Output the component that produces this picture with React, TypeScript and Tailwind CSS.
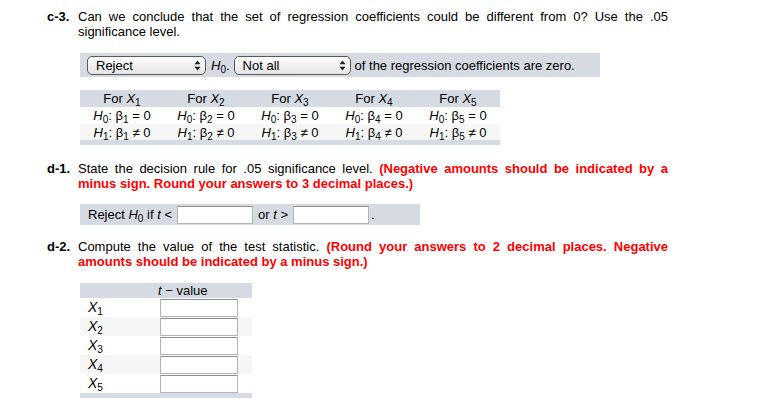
const band = "bg-[#d5dae3]"

function Sub({ v, n }: { v: string; n: string | number }) {
  return (
    <span className="whitespace-nowrap">
      <i>{v}</i>
      <sub className="text-[10px] not-italic relative top-[3px] align-baseline">{n}</sub>
    </span>
  )
}

function Beta({ n }: { n: number }) {
  return (
    <span className="whitespace-nowrap">
      β<sub className="text-[10px] relative top-[3px] align-baseline">{n}</sub>
    </span>
  )
}

function Select({ label, width }: { label: string; width: string }) {
  return (
    <div
      className={`${width} h-[19px] rounded-[5px] border border-[#5a5a5a] bg-gradient-to-b from-white to-[#e4e4e4] flex items-center justify-between pl-[8px] pr-[4px] text-black`}
    >
      <span>{label}</span>
      <svg width="7" height="11" viewBox="0 0 7 11">
        <path d="M3.5 0.5 L6.5 4.3 L0.5 4.3 Z" fill="#222" />
        <path d="M3.5 10.5 L6.5 6.7 L0.5 6.7 Z" fill="#222" />
      </svg>
    </div>
  )
}

function Question({ tag, children }: { tag: string; children: React.ReactNode }) {
  return (
    <div className="flex pl-[47px]">
      <div className="w-[31px] shrink-0 font-bold">{tag}</div>
      <div className="w-[590px] text-justify leading-[15px]">{children}</div>
    </div>
  )
}

const cols = [1, 2, 3, 4, 5]
const inputCls = "bg-white border border-[#b4b4b4] border-t-[#8f8f8f] outline-none"

export default function App() {
  return (
    <div className="w-[772px] h-[408px] bg-white text-black text-[13px] leading-[15px] font-['Liberation_Sans',Arial,sans-serif] pt-[9px] overflow-hidden">
      <Question tag="c-3.">
        Can we conclude that the set of regression coefficients could be different from 0? Use the .05 significance level.
      </Question>

      <div className={`ml-[80px] mt-[14px] w-[520px] h-[24px] ${band} flex items-center pl-[7px]`}>
        <Select label="Reject" width="w-[119px]" />
        <span className="ml-[5px] mr-[4px]">
          <Sub v="H" n={0} />.
        </span>
        <Select label="Not all" width="w-[117px]" />
        <span className="ml-[4px]">of the regression coefficients are zero.</span>
      </div>

      <div className="ml-[80px] mt-[13px] w-[420px]">
        <div className={`grid grid-cols-5 h-[17px] items-center ${band}`}>
          {cols.map((i) => (
            <div key={i} className="text-center">
              For <Sub v="X" n={i} />
            </div>
          ))}
        </div>
        <div className="grid grid-cols-5 h-[17px] items-center bg-white">
          {cols.map((i) => (
            <div key={i} className="text-center">
              <Sub v="H" n={0} />: <Beta n={i} /> = 0
            </div>
          ))}
        </div>
        <div className="grid grid-cols-5 h-[16px] items-center bg-[#f6f6f6]">
          {cols.map((i) => (
            <div key={i} className="text-center">
              <Sub v="H" n={1} />: <Beta n={i} /> ≠ 0
            </div>
          ))}
        </div>
        <div className={`h-[5px] ${band}`} />
      </div>

      <div className="mt-[16px]">
        <Question tag="d-1.">
          State the decision rule for .05 significance level.{" "}
          <span className="text-[#ff0000] font-bold">
            (Negative amounts should be indicated by a minus sign. Round your answers to 3 decimal places.)
          </span>
        </Question>
      </div>

      <div className={`ml-[80px] mt-[13px] w-[340px] h-[21px] ${band} flex items-center pl-[8px]`}>
        <span>
          Reject <Sub v="H" n={0} /> if <i>t</i> &lt;
        </span>
        <input className={`ml-[5px] w-[76px] h-[18px] ${inputCls}`} />
        <span className="ml-[5px]">
          or <i>t</i> &gt;
        </span>
        <input className={`ml-[5px] w-[76px] h-[18px] ${inputCls}`} />
        <span className="ml-[2px]">.</span>
      </div>

      <div className="mt-[14px]">
        <Question tag="d-2.">
          Compute the value of the test statistic.{" "}
          <span className="text-[#ff0000] font-bold">
            (Round your answers to 2 decimal places. Negative amounts should be indicated by a minus sign.)
          </span>
        </Question>
      </div>

      <div className="ml-[80px] mt-[14px] w-[172px]">
        <div className={`h-[15px] ${band} flex items-center pl-[78px]`}>
          <i>t</i>&nbsp;− value
        </div>
        {cols.map((i) => (
          <div key={i} className={`flex items-center h-[19px] ${i % 2 === 0 ? "bg-[#f6f6f6]" : "bg-white"}`}>
            <div className="w-[80px] pl-[8px] text-[14px]">
              <Sub v="X" n={i} />
            </div>
            <input className={`w-[78px] h-[18px] ${inputCls}`} />
          </div>
        ))}
        <div className={`h-[5px] ${band}`} />
      </div>
    </div>
  )
}
